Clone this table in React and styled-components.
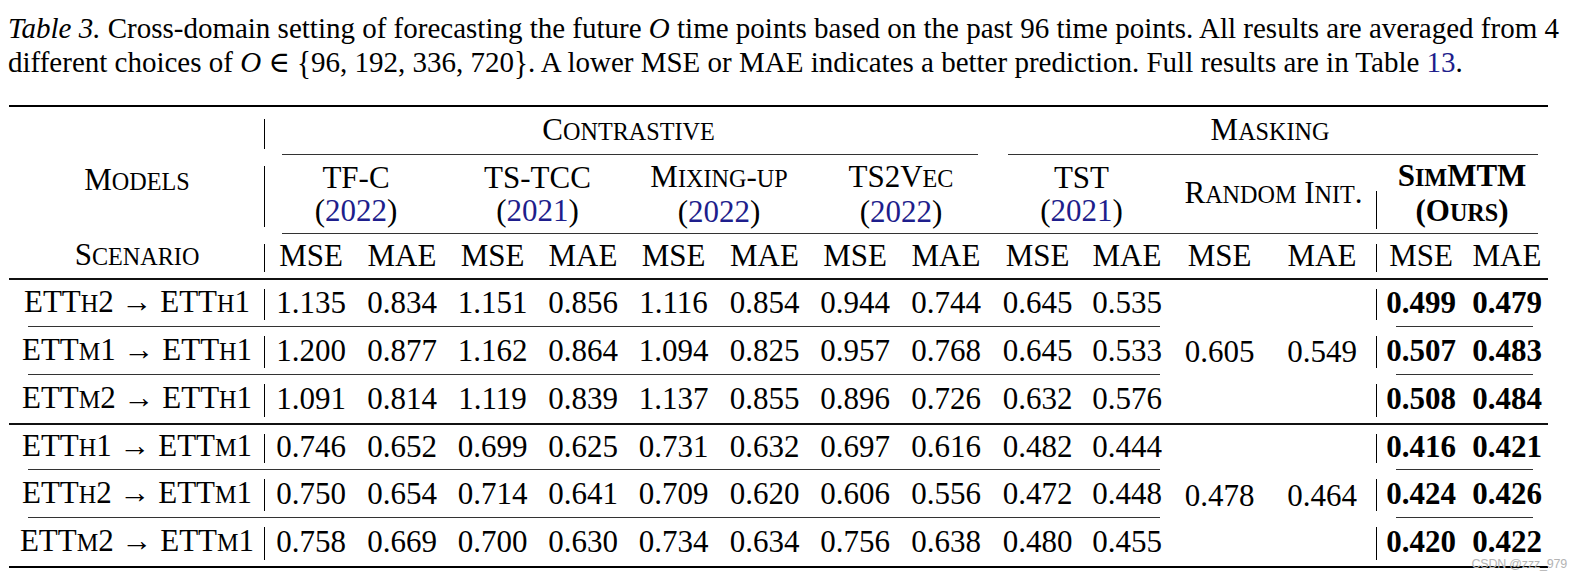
import React from 'react';
import styled, { createGlobalStyle } from 'styled-components';

const GlobalStyle = createGlobalStyle`
    html, body {
        margin: 0;
        padding: 0;
        background: #fff;
    }
    body {
        font-family: "Liberation Serif", "Times New Roman", "DejaVu Serif", serif;
        color: #000;
    }
`;

const Page = styled.div`
    position: relative;
    width: 1581px;
    height: 581px;
    padding: 11px 0 0 8px;
    box-sizing: border-box;
    overflow: hidden;
`;

const Caption = styled.p`
    margin: 0;
    font-size: 29px;
    line-height: 34px;
    white-space: nowrap;
`;

const Em = styled.i`
    font-style: italic;
`;

const Brace = styled.span`
    display: inline-block;
    transform: scaleY(1.15);
`;

const Link = styled.span`
    color: #1e1e8c;
`;

const Small = styled.span`
    font-size: 0.78em;
`;

// column widths and row heights of the table, measured from the screenshot
const COLS = [256, 92, 90, 91, 90, 91, 91, 90, 92, 91, 88, 97, 108, 90, 82];
const ROWS = [2, 47, 1, 78, 1, 44, 2, 46, 1, 47, 1, 48, 2, 44, 1, 47, 1, 48, 2];

const Grid = styled.div`
    display: grid;
    grid-template-columns: ${COLS.map(c => `${c}px`).join(' ')};
    grid-template-rows: ${ROWS.map(r => `${r}px`).join(' ')};
    margin: 26px 0 0 1px;
`;

const Cell = styled.div`
    grid-column: ${p => p.$col + 1} / span ${p => p.$span || 1};
    grid-row: ${p => p.$row} / span ${p => p.$rows || 1};
    display: flex;
    flex-direction: column;
    align-items: center;
    justify-content: ${p => (p.$top ? 'flex-start' : 'center')};
    padding-top: ${p => p.$top || 0}px;
    font-size: 31px;
    line-height: ${p => (p.$lines ? 33 : 30)}px;
    font-weight: ${p => (p.$bold ? 700 : 400)};
    white-space: nowrap;
    background-image: ${p => (p.$bar ? 'linear-gradient(#000, #000)' : 'none')};
    background-repeat: no-repeat;
    background-position: ${p => p.$bar || 'left'} 0 top ${p => p.$barTop ?? 9}px;
    background-size: 1px calc(100% - ${p => (p.$barTop ?? 9) + (p.$barBottom ?? 6)}px);
`;

const Rule = styled.div`
    grid-column: ${p => p.$col + 1} / span ${p => p.$span};
    grid-row: ${p => p.$row};
    align-self: center;
    height: ${p => p.$h || 1}px;
    margin: 0 ${p => p.$mr || 0}px 0 ${p => p.$ml || 0}px;
    background: ${p => p.$color || '#000'};
`;

const Watermark = styled.div`
    position: absolute;
    right: 14px;
    bottom: 11px;
    font-family: "Liberation Sans", Arial, sans-serif;
    font-size: 12.5px;
    line-height: 12px;
    color: #b4b4b4;
    letter-spacing: -0.2px;
`;

// LaTeX-like small caps: lower case letters become capitals at a smaller size
function Sc({ text }) {
    const parts = [];
    let buf = '';
    let low = null;
    for (const ch of text) {
        const isLow = ch !== ch.toUpperCase();
        if (low !== null && isLow !== low) {
            parts.push([buf, low]);
            buf = '';
        }
        buf += ch;
        low = isLow;
    }
    parts.push([buf, low]);
    return parts.map(([t, l], i) =>
        l ? <Small key={i}>{t.toUpperCase()}</Small> : <React.Fragment key={i}>{t}</React.Fragment>
    );
}

const groups = [
    {
        random: ['0.605', '0.549'],
        rows: [
            { from: 'ETTh2', to: 'ETTh1', v: ['1.135', '0.834', '1.151', '0.856', '1.116', '0.854', '0.944', '0.744', '0.645', '0.535'], ours: ['0.499', '0.479'] },
            { from: 'ETTm1', to: 'ETTh1', v: ['1.200', '0.877', '1.162', '0.864', '1.094', '0.825', '0.957', '0.768', '0.645', '0.533'], ours: ['0.507', '0.483'] },
            { from: 'ETTm2', to: 'ETTh1', v: ['1.091', '0.814', '1.119', '0.839', '1.137', '0.855', '0.896', '0.726', '0.632', '0.576'], ours: ['0.508', '0.484'] },
        ],
    },
    {
        random: ['0.478', '0.464'],
        rows: [
            { from: 'ETTh1', to: 'ETTm1', v: ['0.746', '0.652', '0.699', '0.625', '0.731', '0.632', '0.697', '0.616', '0.482', '0.444'], ours: ['0.416', '0.421'] },
            { from: 'ETTh2', to: 'ETTm1', v: ['0.750', '0.654', '0.714', '0.641', '0.709', '0.620', '0.606', '0.556', '0.472', '0.448'], ours: ['0.424', '0.426'] },
            { from: 'ETTm2', to: 'ETTm1', v: ['0.758', '0.669', '0.700', '0.630', '0.734', '0.634', '0.756', '0.638', '0.480', '0.455'], ours: ['0.420', '0.422'] },
        ],
    },
];

const models = [
    { name: <>TF-C</>, year: '2022' },
    { name: <>TS-TCC</>, year: '2021' },
    { name: <Sc text="Mixing-up" />, year: '2022' },
    { name: <>TS2<Sc text="Vec" /></>, year: '2022' },
    { name: <>TST</>, year: '2021' },
];

function Year({ year }) {
    return <span>(<Link>{year}</Link>)</span>;
}

function Group({ group, start }) {
    const cells = [];
    group.rows.forEach((r, i) => {
        const row = start + i * 2;
        cells.push(
            <Cell key={`l${row}`} $col={0} $row={row} $bar="right">
                <span><Sc text={r.from} /> {'\u2192'} <Sc text={r.to} /></span>
            </Cell>
        );
        r.v.forEach((v, j) => {
            cells.push(<Cell key={`v${row}-${j}`} $col={1 + j} $row={row}>{v}</Cell>);
        });
        cells.push(<Cell key={`o${row}-0`} $col={13} $row={row} $bold $bar="left">{r.ours[0]}</Cell>);
        cells.push(<Cell key={`o${row}-1`} $col={14} $row={row} $bold>{r.ours[1]}</Cell>);
        if (i < group.rows.length - 1) {
            cells.push(<Rule key={`c${row}`} $col={0} $span={11} $row={row + 1} $ml={19} $mr={11} $color="#333" />);
            cells.push(<Rule key={`d${row}`} $col={13} $span={2} $row={row + 1} $ml={20} $mr={15} $color="#333" />);
        }
    });
    cells.push(<Cell key={`r${start}-0`} $col={11} $row={start} $rows={5}>{group.random[0]}</Cell>);
    cells.push(<Cell key={`r${start}-1`} $col={12} $row={start} $rows={5}>{group.random[1]}</Cell>);
    return cells;
}

export default function App() {
    return (
        <Page>
            <GlobalStyle />
            <Caption>
                <Em>Table 3.</Em> Cross-domain setting of forecasting the future <Em>O</Em> time points based on the past 96 time points. All results are averaged from 4
                <br />
                different choices of <Em>O</Em> &isin; <Brace>{'{'}</Brace>96, 192, 336, 720<Brace>{'}'}</Brace>. A lower MSE or MAE indicates a better prediction. Full results are in Table <Link>13</Link>.
            </Caption>

            <Grid>
                <Rule $col={0} $span={15} $row={1} $h={2} />

                <Cell $col={0} $row={2} $bar="right" $barTop={12} $barBottom={5} />
                <Cell $col={1} $row={2} $span={8}><span><Sc text="Contrastive" /></span></Cell>
                <Cell $col={9} $row={2} $span={6}><span><Sc text="Masking" /></span></Cell>
                <Rule $col={1} $span={8} $row={3} $ml={17} $mr={14} $color="#333" />
                <Rule $col={9} $span={6} $row={3} $ml={16} $mr={10} $color="#333" />

                <Cell $col={0} $row={4} $lines $top={8} $bar="right" $barTop={11} $barBottom={6}>
                    <span><Sc text="Models" /></span>
                </Cell>
                {models.map((m, i) => (
                    <Cell key={i} $col={1 + i * 2} $span={2} $row={4} $lines>
                        <span>{m.name}</span>
                        <Year year={m.year} />
                    </Cell>
                ))}
                <Cell $col={11} $span={2} $row={4}><span><Sc text="Random Init." /></span></Cell>
                <Cell $col={13} $span={2} $row={4} $lines $bold $bar="left" $barTop={36} $barBottom={4}>
                    <span><Sc text="SimMTM" /></span>
                    <span>(<Sc text="Ours" />)</span>
                </Cell>
                <Rule $col={1} $span={14} $row={5} $ml={17} $mr={10} $color="#333" />

                <Cell $col={0} $row={6} $bar="right" $barTop={10} $barBottom={6}>
                    <span><Sc text="Scenario" /></span>
                </Cell>
                {Array.from({ length: 14 }, (_, i) => (
                    <Cell key={i} $col={1 + i} $row={6} $bar={i === 12 ? 'left' : undefined} $barTop={10} $barBottom={6}>
                        {i % 2 === 0 ? 'MSE' : 'MAE'}
                    </Cell>
                ))}
                <Rule $col={0} $span={15} $row={7} $h={2} $color="#111" />

                <Group group={groups[0]} start={8} />
                <Rule $col={0} $span={15} $row={13} $h={2} $color="#111" />
                <Group group={groups[1]} start={14} />
                <Rule $col={0} $span={15} $row={19} $h={2} />
            </Grid>

            <Watermark>CSDN @zzz_979</Watermark>
        </Page>
    );
}
